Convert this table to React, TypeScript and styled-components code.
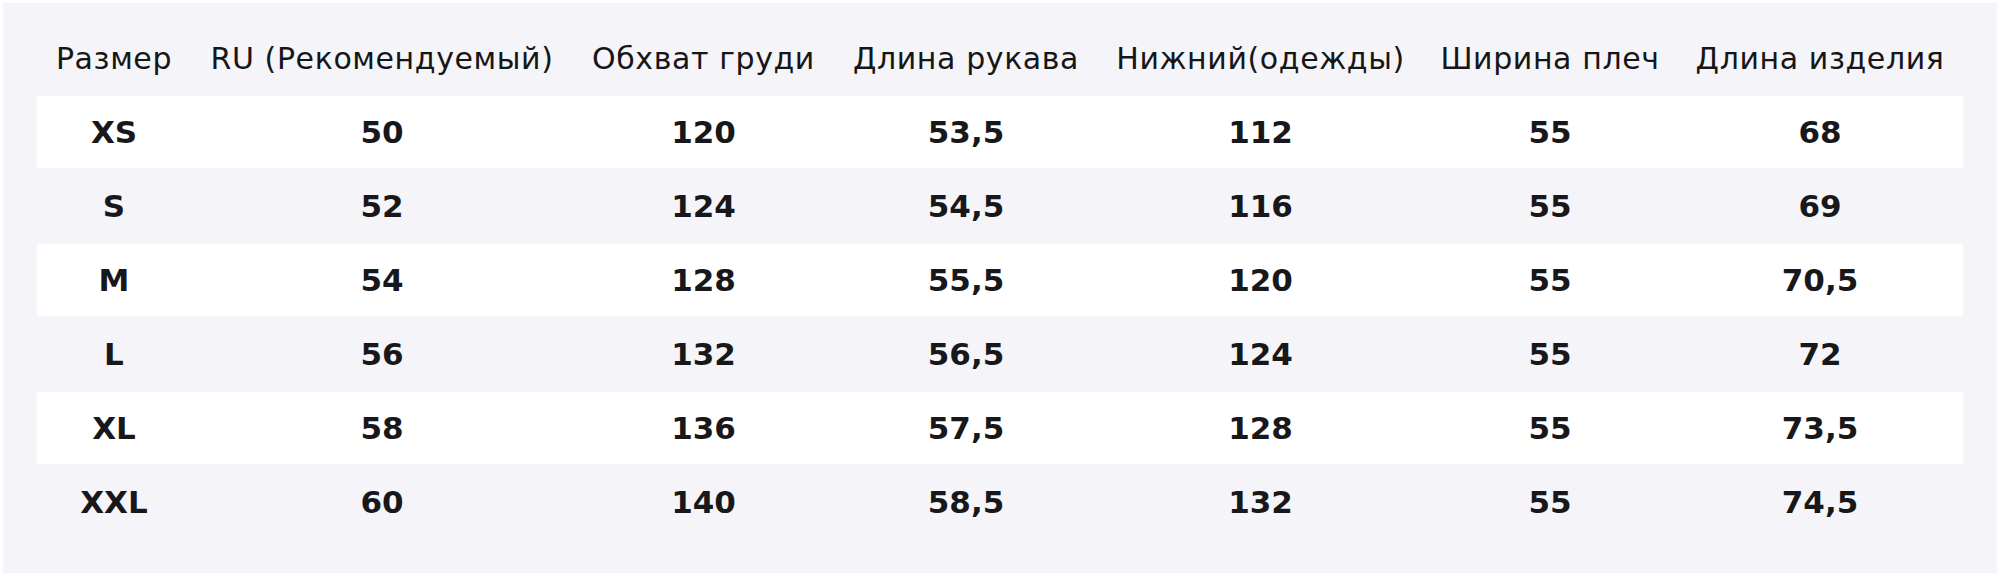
import * as React from 'react';
import styled, { createGlobalStyle } from 'styled-components';

type Column = { title: string; width: number };

const columns: Column[] = [
  { title: 'Размер', width: 154 },
  { title: 'RU (Рекомендуемый)', width: 382 },
  { title: 'Обхват груди', width: 261 },
  { title: 'Длина рукава', width: 264 },
  { title: 'Нижний(одежды)', width: 325 },
  { title: 'Ширина плеч', width: 254 },
  { title: 'Длина изделия', width: 286 },
];

const rows: string[][] = [
  ['XS', '50', '120', '53,5', '112', '55', '68'],
  ['S', '52', '124', '54,5', '116', '55', '69'],
  ['M', '54', '128', '55,5', '120', '55', '70,5'],
  ['L', '56', '132', '56,5', '124', '55', '72'],
  ['XL', '58', '136', '57,5', '128', '55', '73,5'],
  ['XXL', '60', '140', '58,5', '132', '55', '74,5'],
];

export default function App() {
  return (
    <>
      <GlobalStyle />
      <Page>
        <SizePanel>
          <SizeTable>
            <colgroup>
              {columns.map((c) => (
                <col key={c.title} style={{ width: c.width }} />
              ))}
            </colgroup>
            <thead>
              <tr>
                {columns.map((c) => (
                  <HeadCell key={c.title}>{c.title}</HeadCell>
                ))}
              </tr>
            </thead>
            <tbody>
              {rows.map((row, i) => (
                <SizeRow key={row[0]} $striped={i % 2 === 0}>
                  {row.map((value, j) => (
                    <ValueCell key={j}>{value}</ValueCell>
                  ))}
                </SizeRow>
              ))}
            </tbody>
          </SizeTable>
        </SizePanel>
      </Page>
    </>
  );
}

const GlobalStyle = createGlobalStyle`
  body {
    margin: 0;
    background: #ffffff;
    font-family: 'DejaVu Sans', 'Noto Sans', sans-serif;
  }
`;

const Page = styled.div`
  padding: 3px;
`;

const SizePanel = styled.div`
  box-sizing: border-box;
  height: 570px;
  background: #f4f4f9;
  padding: 17px 34px 0;
`;

const SizeTable = styled.table`
  width: 100%;
  table-layout: fixed;
  border-collapse: separate;
  border-spacing: 0 2px;
`;

const HeadCell = styled.th`
  height: 72px;
  padding: 0;
  text-align: center;
  vertical-align: middle;
  font-size: 30px;
  font-weight: 400;
  letter-spacing: 0.6px;
  color: #161616;
  white-space: nowrap;
`;

const SizeRow = styled.tr<{ $striped: boolean }>`
  background: ${(p) => (p.$striped ? '#ffffff' : 'transparent')};
`;

const ValueCell = styled.td`
  height: 72px;
  padding: 0;
  text-align: center;
  vertical-align: middle;
  font-size: 31px;
  font-weight: 700;
  color: #18181b;
`;
